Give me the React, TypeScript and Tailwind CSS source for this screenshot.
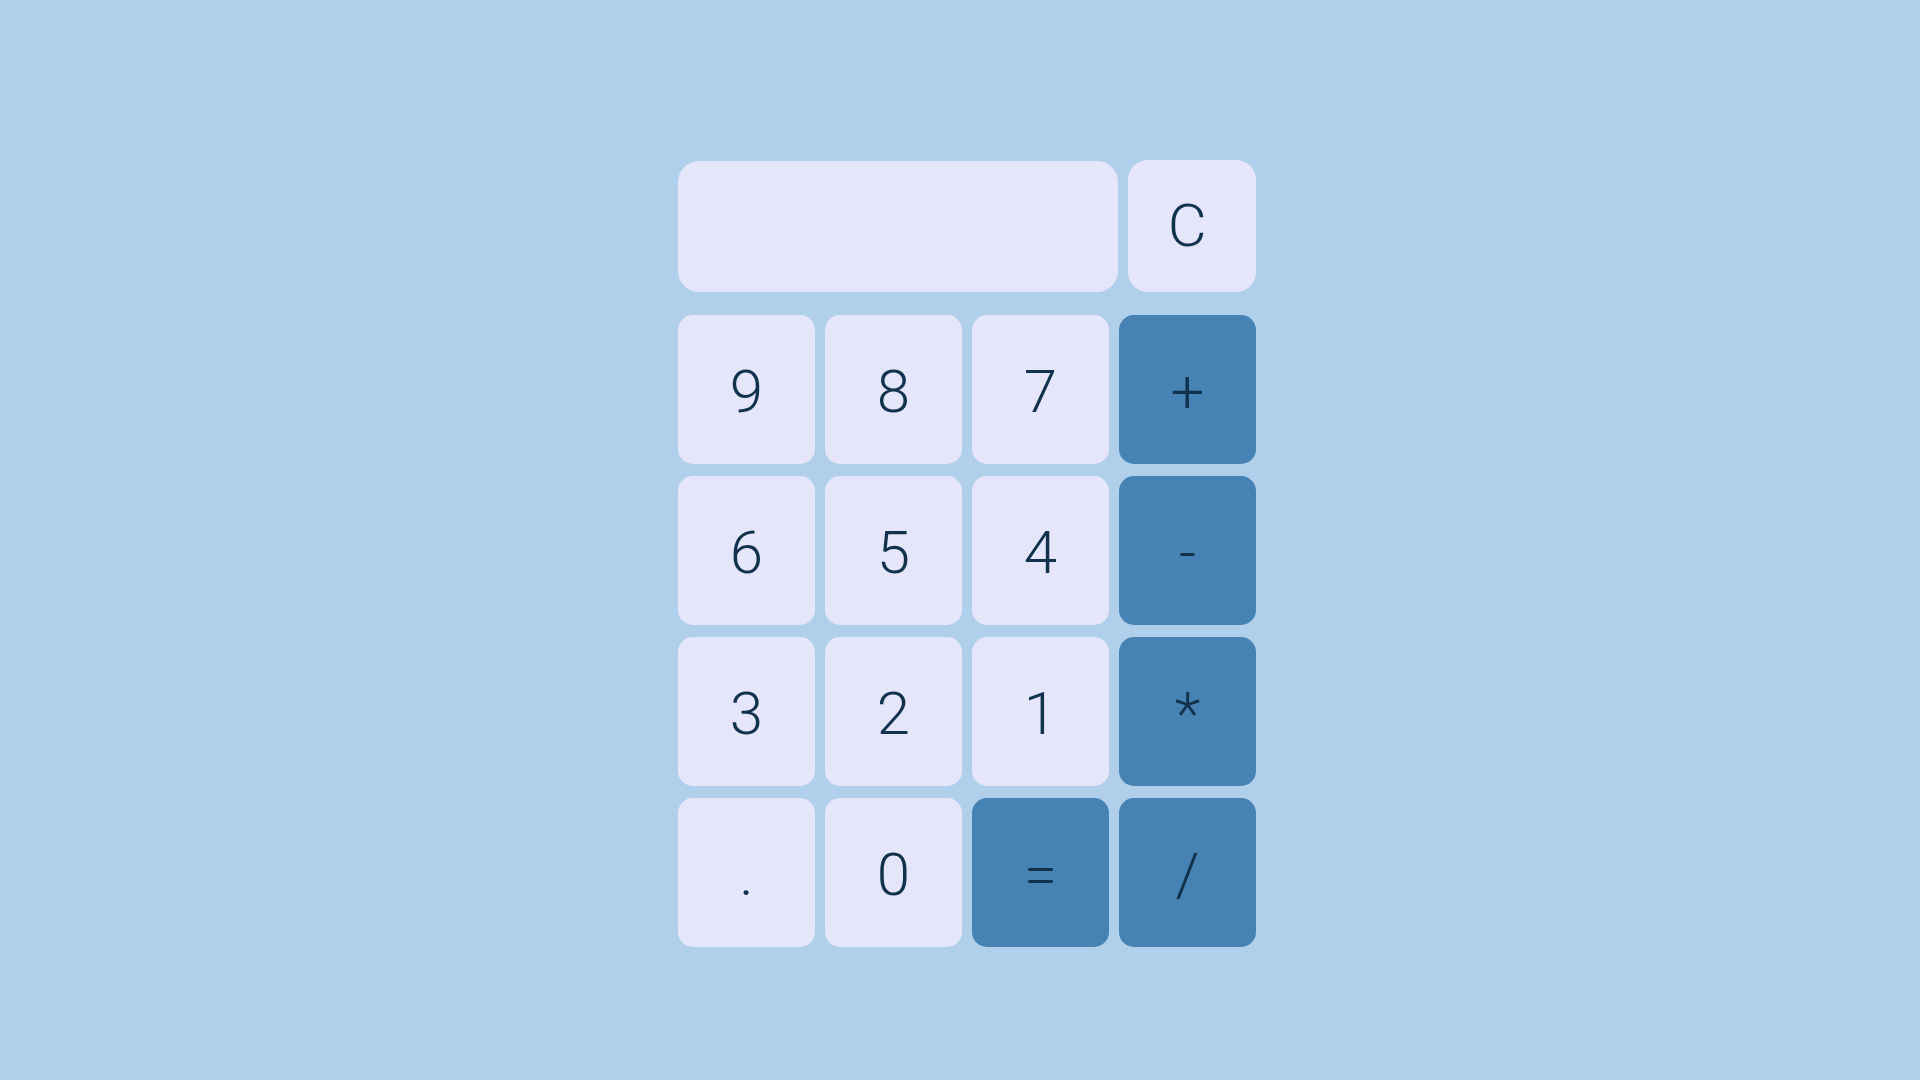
import React, { useState } from 'react';

const KEYS: { label: string; op?: boolean }[] = [
  { label: '9' },
  { label: '8' },
  { label: '7' },
  { label: '+', op: true },
  { label: '6' },
  { label: '5' },
  { label: '4' },
  { label: '-', op: true },
  { label: '3' },
  { label: '2' },
  { label: '1' },
  { label: '*', op: true },
  { label: '.' },
  { label: '0' },
  { label: '=', op: true },
  { label: '/', op: true },
];

export default function App() {
  const [value, setValue] = useState('');

  const press = (key: string) => {
    if (key === '=') {
      try {
        // eslint-disable-next-line no-new-func
        const result = Function(`return (${value})`)();
        setValue(String(result));
      } catch {
        setValue('Error');
      }
      return;
    }
    setValue((v) => (v === 'Error' ? key : v + key));
  };

  return (
    <div className="page-scroll w-screen h-screen overflow-scroll bg-[#b0cfeb]">
      <div
        className="w-[1928px] h-[1134px] pt-[160px] pl-[678px] text-[#11324d]"
        style={{ fontFamily: 'Roboto, "Noto Sans", sans-serif' }}
      >
        <div className="w-[578px] flex flex-col gap-[23px]">
          <div className="flex items-center gap-[10px]">
            <div className="w-[441px] h-[131px] rounded-[21px] bg-[#e6e6fa] flex items-center justify-end px-6 text-[60px] font-light overflow-hidden">
              {value}
            </div>
            <button
              onClick={() => setValue('')}
              className="w-[128px] h-[132px] rounded-[20px] bg-[#e6e6fa] text-[60px] font-light leading-none flex items-center justify-center pr-[10px]"
            >
              C
            </button>
          </div>
          <div className="grid grid-cols-[repeat(4,137px)] auto-rows-[149px] gap-x-[10px] gap-y-[12px]">
            {KEYS.map(({ label, op }) => (
              <button
                key={label}
                onClick={() => press(label)}
                className={`rounded-[15px] text-[60px] font-light leading-none flex items-center justify-center pt-[4px] ${
                  op ? 'bg-[#4682b4]' : 'bg-[#e6e6fa]'
                }`}
              >
                {label}
              </button>
            ))}
          </div>
        </div>
      </div>
      <style>{`
        .page-scroll::-webkit-scrollbar {
          width: 17px;
          height: 17px;
          background: #f1f1f1;
        }
        .page-scroll::-webkit-scrollbar-track {
          background: #f1f1f1;
        }
        .page-scroll::-webkit-scrollbar-thumb:vertical {
          background: #a8a8a8;
          border: 2px solid #f1f1f1;
        }
        .page-scroll::-webkit-scrollbar-thumb:horizontal {
          background: #c1c1c1;
          border: 2px solid #f1f1f1;
        }
        .page-scroll::-webkit-scrollbar-corner {
          background: #dcdcdc;
        }
        .page-scroll::-webkit-scrollbar-button:single-button {
          display: block;
          width: 17px;
          height: 17px;
          background: #f1f1f1;
        }
      `}</style>
    </div>
  );
}
